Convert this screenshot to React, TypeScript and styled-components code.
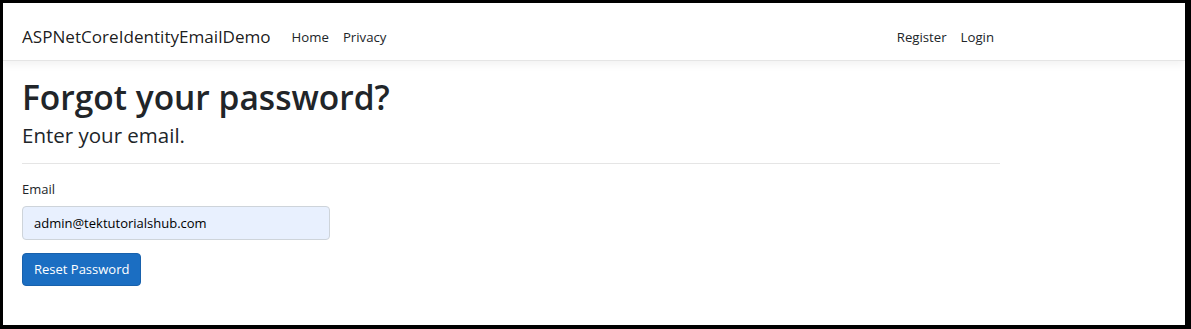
import styled, { createGlobalStyle } from "styled-components";

const GlobalStyle = createGlobalStyle`
  html, body {
    margin: 0;
    padding: 0;
    background: #000;
  }
  body {
    font-family: "Open Sans", "Noto Sans", sans-serif;
    font-size: 13px;
    color: #212529;
  }
`;

const Frame = styled.div`
  box-sizing: border-box;
  width: 1191px;
  height: 329px;
  border-style: solid;
  border-color: #000;
  border-width: 3px 6px 4px 3px;
  background: #fff;
  overflow: hidden;
`;

const Navbar = styled.nav`
  box-sizing: border-box;
  height: 58px;
  padding-top: 10px;
  border-bottom: 1px solid #e5e5e5;
  box-shadow: 0 4px 8px rgba(0, 0, 0, 0.05);
  display: flex;
  align-items: center;
`;

const NavInner = styled.div`
  width: 972px;
  padding-left: 19px;
  display: flex;
  align-items: center;
`;

const Brand = styled.a`
  font-size: 17.1px;
  color: rgba(0, 0, 0, 0.9);
  text-decoration: none;
  margin-right: 21px;
`;

const NavList = styled.ul<{ $end?: boolean }>`
  list-style: none;
  margin: 0;
  padding: 0;
  display: flex;
  gap: 14px;
  margin-left: ${(p) => (p.$end ? "auto" : "0")};
`;

const NavLink = styled.a`
  color: #212529;
  text-decoration: none;
  font-size: 13.2px;
`;

const Main = styled.main`
  width: 978px;
  padding: 16px 0 0 19px;
`;

const Title = styled.h1`
  margin: 0;
  font-size: 33.5px;
  font-weight: 600;
  line-height: 1.2;
`;

const Subtitle = styled.h4`
  margin: 6px 0 0;
  font-size: 20.5px;
  font-weight: 400;
  line-height: 1.2;
`;

const Rule = styled.hr`
  margin: 15px 0 16px;
  border: 0;
  border-top: 1px solid #e5e5e5;
`;

const Label = styled.label`
  display: block;
  font-size: 13px;
  margin-bottom: 8px;
`;

const Input = styled.input`
  box-sizing: border-box;
  display: block;
  width: 308px;
  height: 34px;
  padding: 0 11px;
  font: inherit;
  font-size: 13px;
  color: #000;
  background: #e8f0fe;
  border: 1px solid #ced4da;
  border-radius: 4px;
  margin-bottom: 13px;
`;

const Button = styled.button`
  box-sizing: border-box;
  height: 33px;
  padding: 0 11px;
  font: inherit;
  font-size: 13px;
  color: #fff;
  background: #1b6ec2;
  border: 1px solid #1861ac;
  border-radius: 4px;
`;

export default function App() {
  return (
    <>
      <GlobalStyle />
      <Frame>
        <Navbar>
          <NavInner>
            <Brand href="#">ASPNetCoreIdentityEmailDemo</Brand>
            <NavList>
              <li><NavLink href="#">Home</NavLink></li>
              <li><NavLink href="#">Privacy</NavLink></li>
            </NavList>
            <NavList $end>
              <li><NavLink href="#">Register</NavLink></li>
              <li><NavLink href="#">Login</NavLink></li>
            </NavList>
          </NavInner>
        </Navbar>
        <Main>
          <Title>Forgot your password?</Title>
          <Subtitle>Enter your email.</Subtitle>
          <Rule />
          <form>
            <Label htmlFor="email">Email</Label>
            <Input id="email" type="email" defaultValue="admin@tektutorialshub.com" />
            <Button type="button">Reset Password</Button>
          </form>
        </Main>
      </Frame>
    </>
  );
}
